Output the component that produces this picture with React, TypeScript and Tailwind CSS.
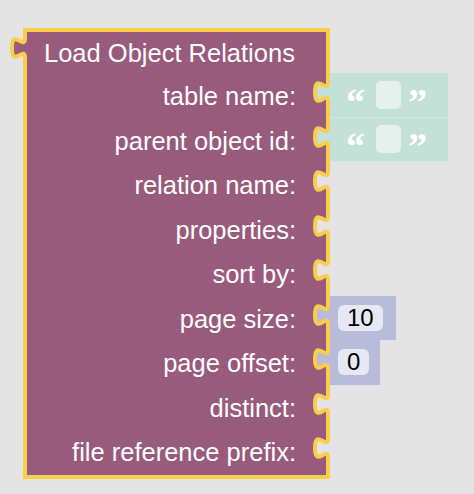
import React from 'react';

const PURPLE = '#995b7b';
const YELLOW = '#f9cf4a';
const TEAL = '#c4e1d8';
const LAVENDER = '#b8bcd8';
const BG = '#e4e4e4';

// puzzle tab drawn over the block's edge; fill is whatever sits inside the curve
const Tab = ({ fill, className }: { fill: string; className: string }) => (
  <svg width="26" height="26" viewBox="0 0 26 26" className={className}>
    <path d="M22,3 c0,13.3 -13,-10.7 -13,10 s13,-3.3 13,10 L26,23 L26,3 Z" fill={fill} />
    <path d="M22,0 V3 c0,13.3 -13,-10.7 -13,10 s13,-3.3 13,10 V26" fill="none" stroke={YELLOW} strokeWidth="4" />
  </svg>
);

const TextBlock = () => (
  <div className="h-full w-[118px] bg-[#c4e1d8] flex items-center pl-[16px] text-white font-['Liberation_Serif',serif] font-bold border-b border-[#d2e8e1]">
    <span className="text-[38px] leading-[18px] mt-[14px] w-[22px]">“</span>
    <div className="ml-[8px] h-[28px] w-[25px] rounded-[5px] bg-[#e6f0ed]" />
    <span className="ml-[7px] text-[38px] leading-[18px] mt-[14px] w-[22px]">”</span>
  </div>
);

const NumberBlock = ({ value, width }: { value: string; width: string }) => (
  <div className={`h-full bg-[#b8bcd8] flex items-center pl-[8px] ${width}`}>
    <div className="h-[26px] px-[9px] rounded-[6px] bg-[#e6e8f3] flex items-center text-black text-[24px] leading-none">
      {value}
    </div>
  </div>
);

const rows: { label: string; kind?: 'text' | 'num10' | 'num0' }[] = [
  { label: 'table name:', kind: 'text' },
  { label: 'parent object id:', kind: 'text' },
  { label: 'relation name:' },
  { label: 'properties:' },
  { label: 'sort by:' },
  { label: 'page size:', kind: 'num10' },
  { label: 'page offset:', kind: 'num0' },
  { label: 'distinct:' },
  { label: 'file reference prefix:' },
];

export default function App() {
  return (
    <div className="min-h-screen w-full bg-[#e4e4e4] pt-[28px] pl-[23px] flex items-start font-['Liberation_Sans',Arial,sans-serif]">
      <div className="relative w-[307px] border-4 border-[#f9cf4a] bg-[#995b7b] text-white">
        <Tab fill={PURPLE} className="absolute left-[-24px] top-[3px]" />
        <div className="h-[42px] flex items-center pl-[17px] text-[25.5px]">Load Object Relations</div>
        {rows.map((r) => {
          const fill = r.kind === 'text' ? TEAL : r.kind ? LAVENDER : BG;
          return (
            <div key={r.label} className="relative h-[44.5px] flex items-center justify-end pr-[30px] text-[25.5px]">
              {r.label}
              <Tab fill={fill} className="absolute right-[-6px] top-[5px]" />
            </div>
          );
        })}
      </div>
      <div className="flex flex-col pt-[45px]">
        {rows.map((r) => (
          <div key={r.label} className="h-[44.5px] flex">
            {r.kind === 'text' && <TextBlock />}
            {r.kind === 'num10' && <NumberBlock value="10" width="w-[66px]" />}
            {r.kind === 'num0' && <NumberBlock value="0" width="w-[50px]" />}
          </div>
        ))}
      </div>
    </div>
  );
}
